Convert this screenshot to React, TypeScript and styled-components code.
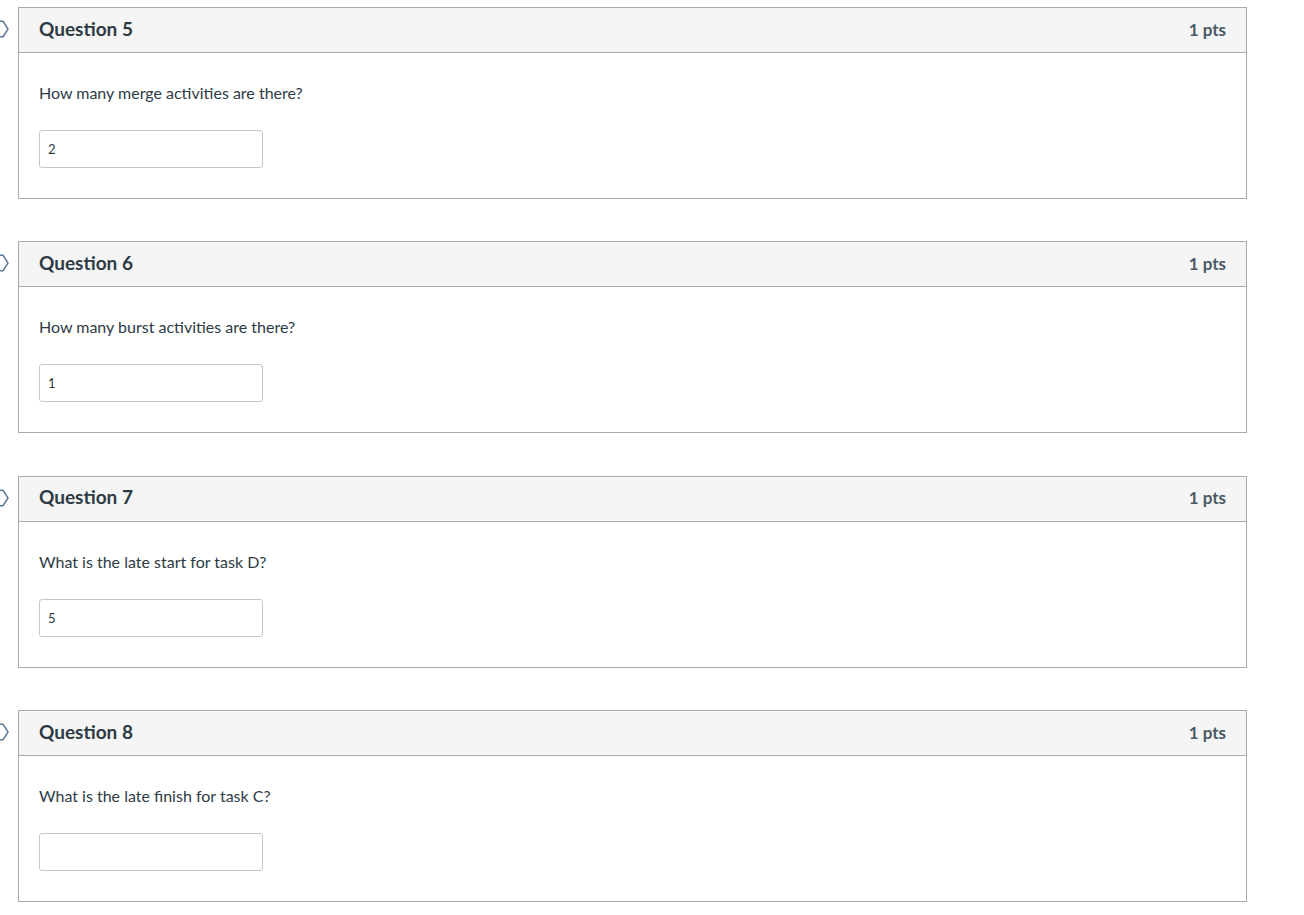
import React from 'react';
import styled, { createGlobalStyle } from 'styled-components';

type Question = {
  number: number;
  text: string;
  answer: string;
};

const questions: Array<Question> = [
  { number: 5, text: 'How many merge activities are there?', answer: '2' },
  { number: 6, text: 'How many burst activities are there?', answer: '1' },
  { number: 7, text: 'What is the late start for task D?', answer: '5' },
  { number: 8, text: 'What is the late finish for task C?', answer: '' },
];

const GlobalStyle = createGlobalStyle`
  body {
    margin: 0;
    background: #fff;
    font-family: Lato, "Noto Sans", sans-serif;
    color: #2d3b45;
  }
`;

const Page = styled.div`
  padding-top: 7px;
  width: 1304px;
`;

const Row = styled.div`
  display: flex;
  align-items: flex-start;
  margin-bottom: 42.4px;
`;

const Marker = styled.div`
  width: 18px;
  flex-shrink: 0;
  padding-top: 13px;
  overflow: hidden;
  display: flex;
`;

const Card = styled.div`
  width: 1229px;
  box-sizing: border-box;
  border: 1px solid #aaa;
`;

const Header = styled.div`
  height: 45px;
  box-sizing: border-box;
  display: flex;
  align-items: center;
  justify-content: space-between;
  padding: 0 20px 4px 20px;
  background: #f5f5f5;
  border-bottom: 1px solid #aaa;
`;

const Title = styled.span`
  font-size: 19px;
  font-weight: 700;
  color: #2d3b45;
`;

const Points = styled.span`
  font-size: 17px;
  font-weight: 700;
  color: #4a5965;
  margin-top: 2px;
`;

const Body = styled.div`
  padding: 30px 20px 30px 20px;
  display: flex;
  flex-direction: column;
  gap: 27px;
`;

const Text = styled.div`
  font-size: 16px;
  line-height: 20px;
  color: #2d3b45;
`;

const Answer = styled.input`
  width: 224px;
  height: 38px;
  box-sizing: border-box;
  border: 1px solid #c7c7c7;
  border-radius: 3px;
  padding: 0 8px;
  font-family: Lato, "Noto Sans", sans-serif;
  font-size: 13px;
  color: #2d3b45;
  background: #fff;
  outline: none;
`;

const FlagIcon = () => (
  <svg width="12" height="18" viewBox="0 0 12 18" style={{ marginLeft: -3 }}>
    <path d="M0.75 1.25 H6 L11 9 L6 16.75 H0.75 Z" fill="none" stroke="#5b7895" strokeWidth="1.4" strokeLinejoin="round" />
  </svg>
);

export default function App() {
  return (
    <Page>
      <GlobalStyle />
      {questions.map((q) => (
        <Row key={q.number}>
          <Marker>
            <FlagIcon />
          </Marker>
          <Card>
            <Header>
              <Title>Question {q.number}</Title>
              <Points>1 pts</Points>
            </Header>
            <Body>
              <Text>{q.text}</Text>
              <Answer type="text" defaultValue={q.answer} readOnly />
            </Body>
          </Card>
        </Row>
      ))}
    </Page>
  );
}
